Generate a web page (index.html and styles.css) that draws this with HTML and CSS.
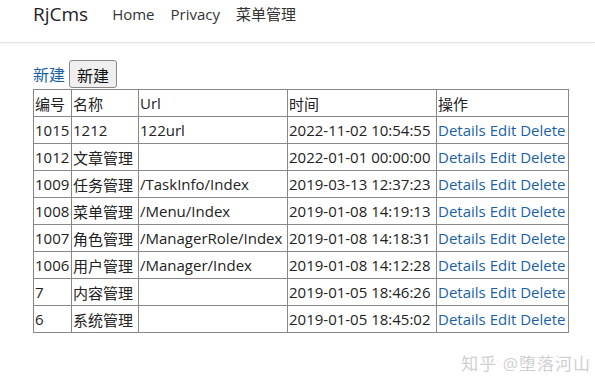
FILE: index.html
```html
<!DOCTYPE html>
<html lang="zh">
<head>
  <meta charset="UTF-8" />
  <title>RjCms</title>
  <link rel="stylesheet" href="styles.css">
</head>
<body>
  <nav class="navbar">
    <a class="brand" href="#">RjCms</a>
    <a class="nav-link" href="#">Home</a>
    <a class="nav-link" href="#">Privacy</a>
    <a class="nav-link" href="#">菜单管理</a>
  </nav>

  <main class="container">
    <div class="toolbar">
      <a href="#" class="new-link">新建</a>
      <button class="new-btn">新建</button>
    </div>

    <table class="grid">
      <tr>
        <th class="c-id">编号</th><th class="c-name">名称</th><th class="c-url">Url</th><th class="c-time">时间</th><th class="c-ops">操作</th>
      </tr>
      <tr><td>1015</td><td>1212</td><td>122url</td><td>2022-11-02 10:54:55</td><td class="ops"><a href="#">Details</a> <a href="#">Edit</a> <a href="#">Delete</a></td></tr>
      <tr><td>1012</td><td>文章管理</td><td></td><td>2022-01-01 00:00:00</td><td class="ops"><a href="#">Details</a> <a href="#">Edit</a> <a href="#">Delete</a></td></tr>
      <tr><td>1009</td><td>任务管理</td><td>/TaskInfo/Index</td><td>2019-03-13 12:37:23</td><td class="ops"><a href="#">Details</a> <a href="#">Edit</a> <a href="#">Delete</a></td></tr>
      <tr><td>1008</td><td>菜单管理</td><td>/Menu/Index</td><td>2019-01-08 14:19:13</td><td class="ops"><a href="#">Details</a> <a href="#">Edit</a> <a href="#">Delete</a></td></tr>
      <tr><td>1007</td><td>角色管理</td><td>/ManagerRole/Index</td><td>2019-01-08 14:18:31</td><td class="ops"><a href="#">Details</a> <a href="#">Edit</a> <a href="#">Delete</a></td></tr>
      <tr><td>1006</td><td>用户管理</td><td>/Manager/Index</td><td>2019-01-08 14:12:28</td><td class="ops"><a href="#">Details</a> <a href="#">Edit</a> <a href="#">Delete</a></td></tr>
      <tr><td>7</td><td>内容管理</td><td></td><td>2019-01-05 18:46:26</td><td class="ops"><a href="#">Details</a> <a href="#">Edit</a> <a href="#">Delete</a></td></tr>
      <tr><td>6</td><td>系统管理</td><td></td><td>2019-01-05 18:45:02</td><td class="ops"><a href="#">Details</a> <a href="#">Edit</a> <a href="#">Delete</a></td></tr>
    </table>
  </main>

  <div class="watermark">知乎 @堕落河山</div>
</body>
</html>
```

FILE: styles.css
```css
* { box-sizing: border-box; }

body {
  margin: 0;
  font-family: "Open Sans", "Noto Sans CJK SC", sans-serif;
  font-size: 15px;
  color: #222;
  background: #fff;
  position: relative;
  height: 390px;
  overflow: hidden;
}

.navbar {
  height: 43px;
  display: flex;
  align-items: flex-start;
  padding: 1px 33px 0;
  border-bottom: 1px solid #e5e5e5;
  box-shadow: 0 1px 3px rgba(0,0,0,0.05);
}

.brand {
  font-size: 19px;
  line-height: 26px;
  color: #222;
  text-decoration: none;
  margin-right: 24px;
}

.nav-link {
  color: #333;
  text-decoration: none;
  font-size: 15px;
  line-height: 26px;
  margin-right: 16px;
}

.container {
  padding: 16px 33px 0;
}

.toolbar {
  display: flex;
  align-items: center;
  gap: 4px;
  height: 30px;
  font-size: 16px;
}

.new-link {
  color: #1a5fa8;
  text-decoration: none;
}

.new-btn {
  font-family: inherit;
  font-size: 16px;
  color: #111;
  background: #efefef;
  border: 1px solid #888;
  border-radius: 3px;
  padding: 2px 7px;
  height: 28px;
}

.grid {
  border-collapse: collapse;
  border: 1px solid #333;
  table-layout: fixed;
  width: 535px;
}

.grid th, .grid td {
  border: 1px solid #888;
  padding: 0 1px;
  height: 27px;
  font-weight: normal;
  text-align: left;
  white-space: nowrap;
  overflow: hidden;
}

.c-id { width: 38px; }
.c-name { width: 67px; }
.c-url { width: 149px; }
.c-time { width: 149px; }
.c-ops { width: 132px; }

.ops a {
  color: #1a5fa8;
  text-decoration: none;
}

.watermark {
  position: absolute;
  right: 4px;
  bottom: 15px;
  font-size: 17px;
  color: #d0d0d0;
  letter-spacing: 1px;
}
```
